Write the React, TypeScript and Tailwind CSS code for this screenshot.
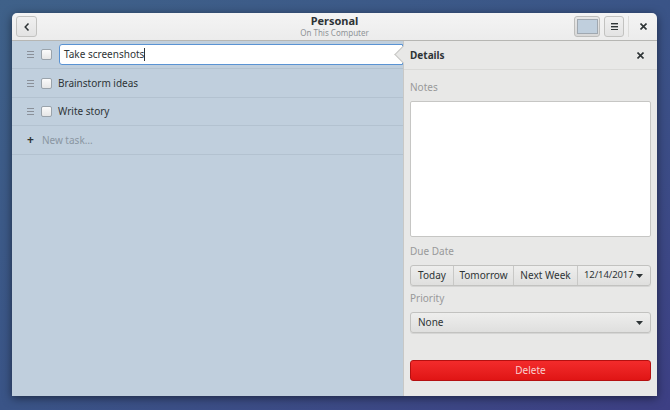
import React from "react";

const font = { fontFamily: '"Noto Sans", "Open Sans", sans-serif' };

function DragHandle({ dark = false }: { dark?: boolean }) {
  const c = dark ? "#2e3436" : "#8a9099";
  const h = dark ? 1.4 : 1;
  return (
    <svg width="7" height="7" viewBox="0 0 7 7">
      <rect x="0" y="0" width="7" height={h} fill={c} />
      <rect x="0" y="3" width="7" height={h} fill={c} />
      <rect x="0" y="6" width="7" height={h} fill={c} />
    </svg>
  );
}

function Check() {
  return (
    <div className="w-[11px] h-[11px] rounded-[2px] border border-[#9aa3ab] bg-gradient-to-b from-[#fbfbfb] to-[#e6e6e6]" />
  );
}

function CloseX({ className = "" }: { className?: string }) {
  return (
    <svg width="7" height="7" viewBox="0 0 7 7" className={className}>
      <path d="M0.5 0.5 L6.5 6.5 M6.5 0.5 L0.5 6.5" stroke="#2e3436" strokeWidth="1.6" />
    </svg>
  );
}

function Caret() {
  return (
    <svg width="7" height="4" viewBox="0 0 7 4">
      <path d="M0 0 L7 0 L3.5 4 Z" fill="#2e3436" />
    </svg>
  );
}

const tasks = [
  { title: "Take screenshots", h: "h-[28px]" },
  { title: "Brainstorm ideas", h: "h-[29px]" },
  { title: "Write story", h: "h-[28px]" },
];

export default function App() {
  return (
    <div
      className="w-[670px] h-[410px] overflow-hidden bg-gradient-to-br from-[#3f6189] via-[#3a5487] to-[#3d3f84] pl-[12px] pt-[13px] text-[#2e3436]"
      style={font}
    >
      <div className="w-[645px] h-[383px] flex flex-col rounded-t-[5px] overflow-hidden shadow-[0_2px_10px_rgba(0,0,0,0.5)]">
        {/* header bar */}
        <div className="h-[28px] shrink-0 flex items-center bg-gradient-to-b from-[#f4f4f4] to-[#ececec] border-b border-[#b6b6b3] pl-[4px] relative">
          <button className="w-[21px] h-[21px] rounded-[3px] border border-[#c2c2c0] bg-gradient-to-b from-[#f0f0f0] to-[#e3e3e3] flex items-center justify-center">
            <svg width="6" height="8" viewBox="0 0 6 8">
              <path d="M4.5 0.5 L1.2 4 L4.5 7.5" stroke="#2e3436" strokeWidth="1.5" fill="none" />
            </svg>
          </button>
          <div className="absolute left-0 right-0 top-0 bottom-0 flex flex-col items-center justify-center pointer-events-none leading-none">
            <div className="text-[11px] font-bold text-[#2e3436] -mt-[1px]">Personal</div>
            <div className="text-[8px] text-[#8f9497] mt-[3px]">On This Computer</div>
          </div>
          <div className="ml-auto flex items-center">
            <div className="w-[26px] h-[21px] rounded-[3px] border border-[#bdbdbb] bg-gradient-to-b from-[#e6e6e6] to-[#d8d8d8] flex items-center justify-center">
              <div className="w-[21px] h-[15px] bg-[#c0cfdd] border border-[#a0a8b0]" />
            </div>
            <div className="w-[20px] h-[21px] ml-[4px] rounded-[3px] border border-[#c2c2c0] bg-gradient-to-b from-[#f0f0f0] to-[#e3e3e3] flex items-center justify-center">
              <DragHandle dark />
            </div>
            <div className="w-px h-[21px] bg-[#dcdcda] ml-[4px]" />
            <div className="w-[28px] flex items-center justify-center">
              <CloseX />
            </div>
          </div>
        </div>

        <div className="flex flex-1 min-h-0">
          {/* list pane */}
          <div className="w-[391px] bg-[#c0cfdd] flex flex-col text-[10px]">
            {tasks.map((t, i) => (
              <div key={t.title} className={`${t.h} shrink-0 flex items-center border-b border-[#b3c2d0] pl-[15px]`}>
                <DragHandle />
                <div className="ml-[7px]">
                  <Check />
                </div>
                {i === 0 ? (
                  <div className="ml-[7px] flex-1 h-[21px] bg-white border border-[#5a93d3] rounded-l-[3px] flex items-center pl-[4px]">
                    <span>{t.title}</span>
                    <span className="w-px h-[13px] bg-[#2e3436]" />
                  </div>
                ) : (
                  <span className="ml-[6px]">{t.title}</span>
                )}
              </div>
            ))}
            <div className="h-[29px] shrink-0 flex items-center border-b border-[#b3c2d0] pl-[15px]">
              <span className="text-[12px] font-bold leading-none text-[#2e3436]">+</span>
              <span className="ml-[8px] text-[#8a96a2]">New task…</span>
            </div>
          </div>

          {/* details pane */}
          <div className="flex-1 bg-[#e8e8e7] border-l border-[#c8c8c6] flex flex-col relative text-[10px]">
            <div className="absolute left-[-7px] top-[7px] w-[13px] h-[13px] rotate-45 bg-[#e8e8e7] border-l border-b border-[#c8c8c6]" />
            <div className="h-[29px] shrink-0 flex items-center border-b border-[#dadad8] pl-[6px] pr-[13px] pt-[1px] relative">
              <span className="font-bold">Details</span>
              <CloseX className="ml-auto" />
            </div>
            <div className="px-[6px] pt-[12px] flex flex-col">
              <div className="text-[#98999a] leading-none">Notes</div>
              <div className="mt-[9px] h-[136px] bg-white border border-[#c6c6c4] rounded-[2px]" />
              <div className="mt-[9px] text-[#98999a] leading-none">Due Date</div>
              <div className="mt-[9px] h-[21px] flex rounded-[3px] border border-[#c2c2c0] bg-gradient-to-b from-[#eeeeed] to-[#dfdfde] shadow-[0_1px_0_rgba(0,0,0,0.08)]">
                <div className="w-[43px] flex items-center justify-center border-r border-[#c8c8c6]">Today</div>
                <div className="w-[60px] flex items-center justify-center border-r border-[#c8c8c6]">Tomorrow</div>
                <div className="w-[64px] flex items-center justify-center border-r border-[#c8c8c6]">Next Week</div>
                <div className="flex-1 flex items-center pl-[6px] pr-[7px]">
                  <span className="text-[9.5px] tracking-[-0.1px]">12/14/2017</span>
                  <span className="ml-auto">
                    <Caret />
                  </span>
                </div>
              </div>
              <div className="mt-[7px] text-[#98999a] leading-none">Priority</div>
              <div className="mt-[9px] h-[21px] flex items-center justify-between pl-[7px] pr-[7px] rounded-[3px] border border-[#c2c2c0] bg-gradient-to-b from-[#eeeeed] to-[#dfdfde] shadow-[0_1px_0_rgba(0,0,0,0.08)]">
                <span>None</span>
                <Caret />
              </div>
              <div className="mt-[27px] h-[21px] flex items-center justify-center rounded-[3px] border border-[#b51010] bg-gradient-to-b from-[#f32b2b] to-[#e01414] text-[#f9cfcf]">
                Delete
              </div>
            </div>
          </div>
        </div>
      </div>
    </div>
  );
}
